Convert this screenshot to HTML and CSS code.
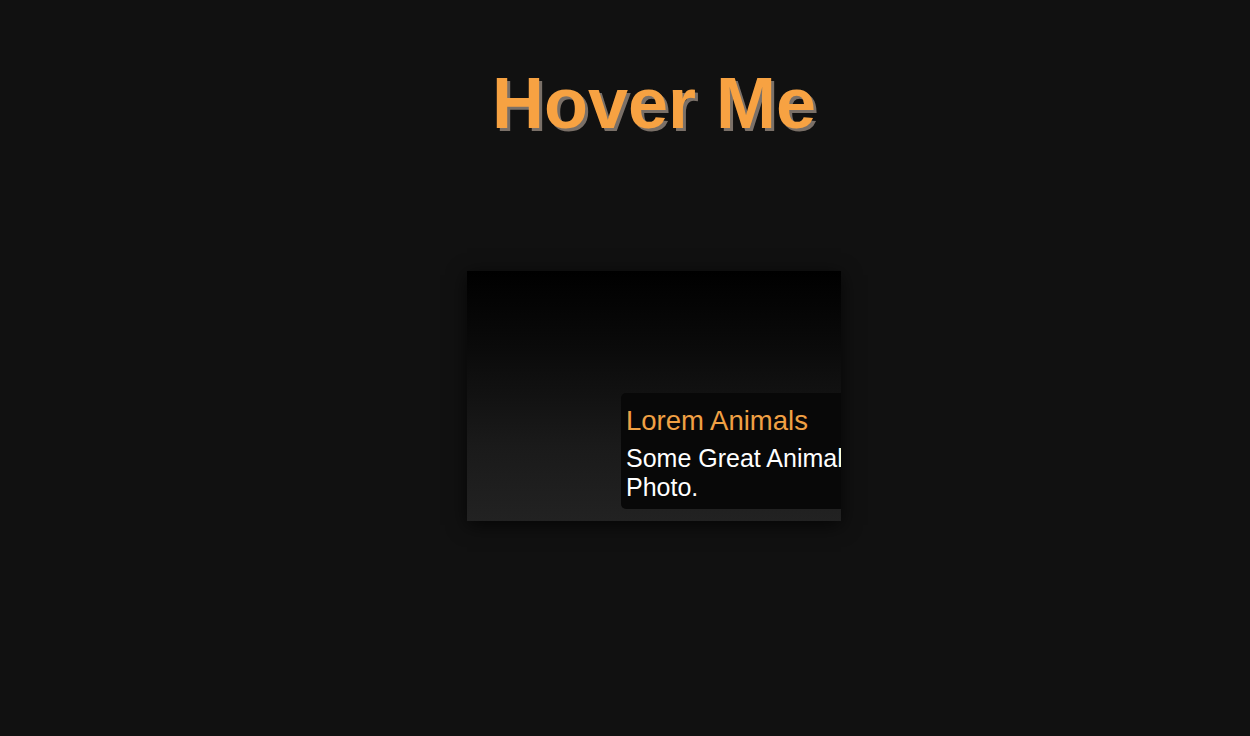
FILE: index.html
```html
<!DOCTYPE html>
<html>
<head>
<meta charset="utf-8">
<link rel="stylesheet" href="styles.css">
</head>
<body>
<main class="page">
  <h1 class="title">Hover Me</h1>
  <div class="card">
    <div class="caption">
      <h2 class="caption-title">Lorem Animals</h2>
      <p class="caption-text">Some Great Animal Photo.</p>
    </div>
  </div>
</main>
</body>
</html>
```
FILE: styles.css
```css
html, body {
  margin: 0;
  padding: 0;
  background: #111111;
  height: 100%;
}
.page {
  display: flex;
  flex-direction: column;
  align-items: center;
  padding: 62px 0 0 58px;
  font-family: "Liberation Sans", Arial, sans-serif;
}
.title {
  margin: 0;
  font-size: 72px;
  font-weight: bold;
  line-height: normal;
  color: #f7a242;
  text-shadow: 3px 3px 0 #7a7068;
}
.card {
  margin-top: 127px;
  width: 374px;
  height: 250px;
  position: relative;
  overflow: hidden;
  background: linear-gradient(to bottom, #000000 0%, #0a0a0a 30%, #1a1a1a 70%, #222222 100%);
  box-shadow: 0 4px 18px rgba(0, 0, 0, 0.7);
}
.caption {
  position: absolute;
  left: 154px;
  top: 122px;
  width: 226px;
  padding: 12px 4px 7px 5px;
  background: #080808;
  border-radius: 5px;
  box-sizing: content-box;
}
.caption-title {
  margin: 0 0 7px 0;
  font-size: 27.5px;
  font-weight: normal;
  line-height: normal;
  color: #f0a044;
}
.caption-text {
  margin: 0;
  font-size: 25px;
  line-height: normal;
  color: #ffffff;
}
```
